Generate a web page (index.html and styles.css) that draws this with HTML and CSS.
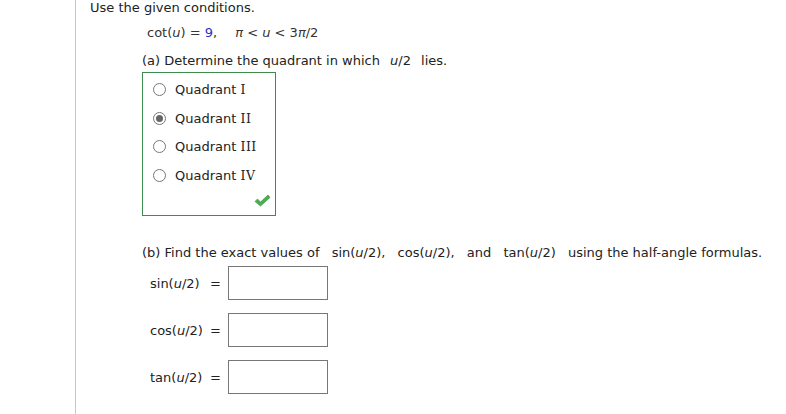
FILE: index.html
```html
<!DOCTYPE html>
<html>
<head>
<meta charset="utf-8">
<link rel="stylesheet" href="styles.css">
</head>
<body>
<div class="page">
  <div class="intro">Use the given conditions.</div>
  <div class="cond">cot(<i>u</i>) = <span class="blue">9</span>,<span class="sp"></span><i>π</i> &lt; <i>u</i> &lt; 3<i>π</i>/2</div>
  <div class="part">
    <div class="q">(a) Determine the quadrant in which <span class="spa"></span><i>u</i>/2 <span class="spa"></span>lies.</div>
    <div class="box">
      <div class="opt"><span class="radio"></span><span class="lbl">Quadrant <span class="num">I</span></span></div>
      <div class="opt"><span class="radio on"></span><span class="lbl">Quadrant <span class="num">II</span></span></div>
      <div class="opt"><span class="radio"></span><span class="lbl">Quadrant <span class="num">III</span></span></div>
      <div class="opt"><span class="radio"></span><span class="lbl">Quadrant <span class="num">IV</span></span></div>
      <div class="checkrow">
        <svg class="check" width="17" height="13" viewBox="0 0 17 13"><path d="M1 7.5 L3.5 5 L6.5 8 L14 1 L16 3.5 L6.5 12 Z" fill="#4caf50" stroke="#2e8b3a" stroke-width="0.6" stroke-linejoin="round"/></svg>
      </div>
    </div>
    <div class="qb">(b) Find the exact values of <span class="spb"></span>sin(<i>u</i>/2), <span class="spb"></span>cos(<i>u</i>/2), <span class="spb"></span>and <span class="spb"></span>tan(<i>u</i>/2) <span class="spb"></span>using the half-angle formulas.</div>
    <div class="row first"><span class="fl">sin(<i>u</i>/2)</span><span class="eq">=</span><span class="inp"></span></div>
    <div class="row"><span class="fl">cos(<i>u</i>/2)</span><span class="eq">=</span><span class="inp"></span></div>
    <div class="row"><span class="fl">tan(<i>u</i>/2)</span><span class="eq">=</span><span class="inp"></span></div>
  </div>
</div>
</body>
</html>
```
FILE: styles.css
```css
html, body { margin: 0; padding: 0; background: #fff; }
body { font-family: "DejaVu Sans", Verdana, sans-serif; font-size: 13px; color: #222; }
.page { margin-left: 75px; border-left: 1px solid #c8c8c8; min-height: 414px; padding-left: 14px; box-sizing: border-box; }
.intro { line-height: 16px; }
.cond { margin-left: 57px; margin-top: 9px; line-height: 16px; color: #333; }
.blue { color: #2233cc; }
i { font-style: italic; }
.sp { display: inline-block; width: 18px; }
.spa { display: inline-block; width: 6px; }
.spb { display: inline-block; width: 8px; }
.part { margin-left: 52px; }
.q { margin-top: 12px; line-height: 16px; }
.box { margin-top: 3px; width: 134px; height: 144px; border: 1px solid #3d8b4f; box-sizing: border-box; display: flex; flex-direction: column; padding-top: 2px; }
.opt { display: flex; align-items: center; height: 28.7px; padding-left: 10px; }
.radio { width: 11px; height: 11px; border: 1px solid #777; border-radius: 50%; display: flex; align-items: center; justify-content: center; margin-right: 9px; flex: none; }
.radio.on::after { content: ""; width: 7px; height: 7px; border-radius: 50%; background: #666; }
.lbl { color: #222; }
.num { font-family: "DejaVu Serif", serif; font-size: 12.5px; letter-spacing: 0.5px; }
.checkrow { display: flex; justify-content: flex-end; padding-right: 4px; margin-top: 4px; }
.qb { margin-top: 29px; line-height: 16px; }
.row { display: flex; align-items: center; height: 34px; margin-top: 13px; }
.row.first { margin-top: 5px; }
.fl { width: 60px; padding-left: 8px; }
.eq { width: 18px; }
.inp { width: 100px; height: 34px; border: 1px solid #777; box-sizing: border-box; }
```
